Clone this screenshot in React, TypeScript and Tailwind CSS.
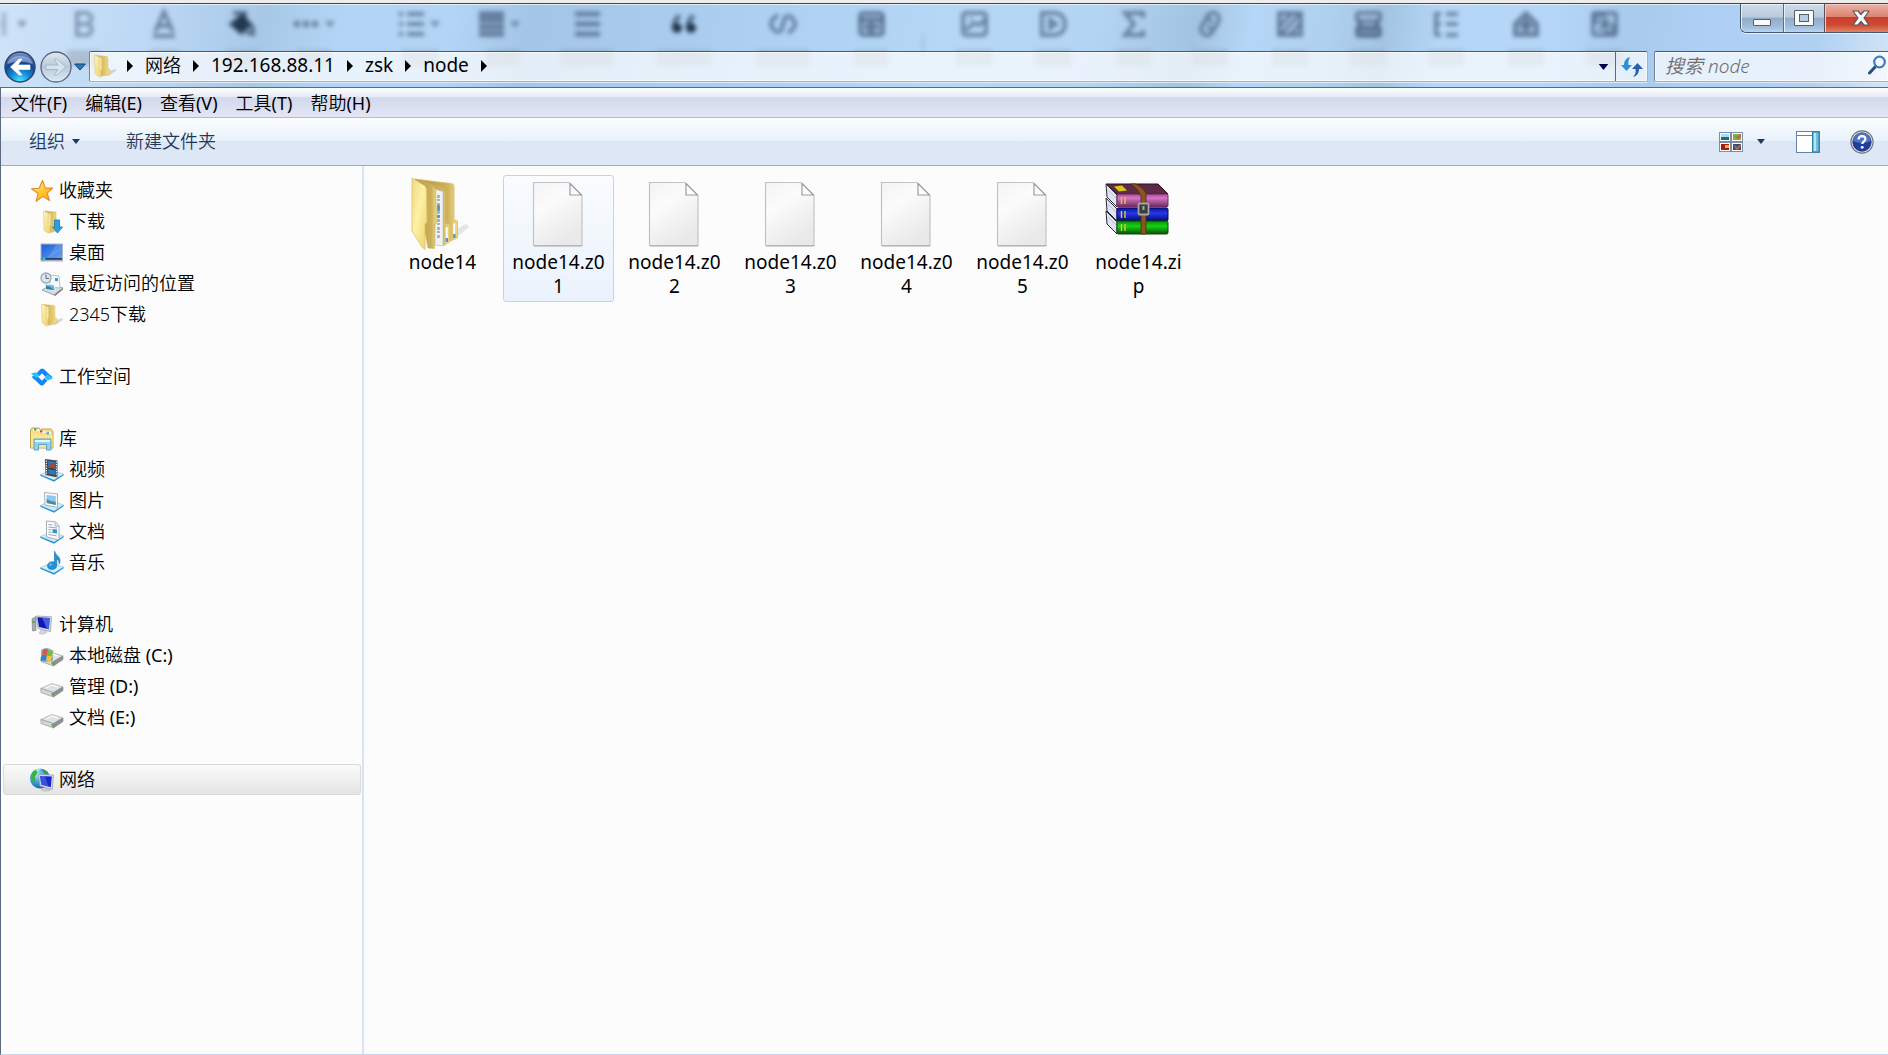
import React from "react";

type IconProps = { className?: string };

function FolderIcon({ className, children }: IconProps & { children?: React.ReactNode }) {
  return (
    <svg viewBox="0 0 24 24" className={className} aria-hidden="true">
      <defs>
        <linearGradient id="foldBack" x1="0" x2="1" y1="0" y2="0">
          <stop offset="0" stopColor="#c9a94e" />
          <stop offset=".55" stopColor="#dcc26a" />
          <stop offset="1" stopColor="#f5e08d" />
        </linearGradient>
        <linearGradient id="foldFront" x1="0" x2="1" y1="0" y2="1">
          <stop offset="0" stopColor="#fdf6c4" />
          <stop offset="1" stopColor="#efd473" />
        </linearGradient>
      </defs>
      <path d="M15 22l8-5-1-2-7 3z" fill="#b9bcc0" opacity=".6" />
      <path d="M3 1.500l11 1 .8 1v11l2 1v5l-2 .6-8 1.400z" fill="url(#foldBack)" stroke="#d8bd66" strokeWidth=".6" />
      <path d="M1.500 1l5 2.200V23.300L2 19.500z" fill="url(#foldFront)" stroke="#e0c873" strokeWidth=".6" />
      <path d="M6.500 3.200l2 1V15l-1 1v7.200l-1 .1z" fill="#f7e9a5" />
      {children}
    </svg>
  );
}

function StarIcon({ className }: IconProps) {
  return (
    <svg viewBox="0 0 24 24" className={className} aria-hidden="true">
      <defs>
        <linearGradient id="star" x1="0" x2="1" y1="0" y2="1">
          <stop offset="0" stopColor="#fff6a8" />
          <stop offset=".5" stopColor="#ffc832" />
          <stop offset="1" stopColor="#f59d1a" />
        </linearGradient>
      </defs>
      <path d="M12.500 1.500l2.800 7.400 7.400.2-5.500 5 2.300 7.500-6.700-4.200-6.600 4.800 2-7.700L1.500 9.800l7.600-.6z" fill="url(#star)" stroke="#e08a2c" strokeWidth="1.100" strokeLinejoin="round" />
    </svg>
  );
}

function DownloadsIcon({ className }: IconProps) {
  return (
    <svg viewBox="0 0 24 24" className={className} aria-hidden="true">
      <path d="M5 1l11 1v12l2 1v5.500L9 23z" fill="url(#foldBack)" stroke="#d8bd66" strokeWidth=".6" />
      <path d="M3.500 1l5 2.200V23.300L4 20.500z" fill="url(#foldFront)" stroke="#e0c873" strokeWidth=".6" />
      <path d="M8.500 3.200l2 1V15l-1 1v7.200l-1 .1z" fill="#f7e9a5" />
      <path d="M14.500 10h5v7h3L17.500 23l-5-6h2z" fill="#2d9fdc" stroke="#1478b4" strokeWidth=".8" />
    </svg>
  );
}

function DesktopIcon({ className }: IconProps) {
  return (
    <svg viewBox="0 0 24 24" className={className} aria-hidden="true">
      <defs>
        <linearGradient id="desk" x1="0" x2="1" y1="0" y2="1">
          <stop offset="0" stopColor="#1f5fd2" />
          <stop offset=".5" stopColor="#3f7fe6" />
          <stop offset="1" stopColor="#6aa7f2" />
        </linearGradient>
      </defs>
      <rect x=".5" y="2.500" width="22.500" height="18" fill="#a9b4c4" />
      <rect x="1.500" y="3.500" width="20.500" height="14" fill="url(#desk)" />
      <path d="M8 17.500L16 3.500h6V9z" fill="#fff" opacity=".13" />
      <rect x="1.500" y="17" width="20.500" height="1.800" fill="#2a3f63" />
      <circle cx="3.800" cy="18" r="1.700" fill="#3bc0d8" />
    </svg>
  );
}

function RecentIcon({ className }: IconProps) {
  return (
    <svg viewBox="0 0 24 24" className={className} aria-hidden="true">
      <path d="M2 18l8-5 13 3-9 7z" fill="#d8dadd" stroke="#8c9094" strokeWidth=".8" />
      <path d="M14 23l9-7v1.500L15 24z" fill="#777b80" />
      <path d="M10 3l9 1 1 12-10-1z" fill="#f7fafc" stroke="#aab4bc" strokeWidth=".8" />
      <path d="M15 6l3 .3v3l-3-.3z" fill="#4a90cf" />
      <path d="M5 12l9 1 1.500 6L6 17z" fill="#67b3e4" stroke="#e9eff4" strokeWidth="1" />
      <path d="M6 14l4 1 4 3-8-1z" fill="#2c7ba8" />
      <circle cx="6" cy="6" r="5" fill="#dce7ee" stroke="#9aabb8" strokeWidth="1.300" />
      <path d="M6 2.500V6.500h3" fill="none" stroke="#556b7c" strokeWidth="1" />
    </svg>
  );
}

function WorkspaceIcon({ className }: IconProps) {
  return (
    <svg viewBox="0 0 24 24" className={className} aria-hidden="true">
      <path d="M6.500 8.500L10.500 4q1.700-1.200 3.300 0l5.200 5 3.500 3-4.500 2.500-6-6.200-2.500 2.700z" fill="#1685f8" />
      <path d="M17.500 15.500L13.500 20q-1.700 1.200-3.300 0L5 15l-3.500-3L6 9.500l6 6.200 2.500-2.700z" fill="#1685f8" />
      <path d="M1 8.500l5-1.200 3.500 3L6.500 13.500z" fill="#24c4f7" />
      <path d="M23 13.500l-5 1.700-3.500-3 3-3z" fill="#24c4f7" />
    </svg>
  );
}

function LibraryIcon({ className }: IconProps) {
  return (
    <svg viewBox="0 0 24 24" className={className} aria-hidden="true">
      <path d="M.5 3L2 1h7l1.500 1.500L12 2h9l2 2.500V21H.5z" fill="#f5dd84" stroke="#b99b4b" strokeWidth=".9" />
      <path d="M3 2h6v2H3zM9.500 4h5v2h-5zM16 5h5v2h-5z" fill="#fff" />
      <path d="M4 1.500h2.500V3.500H4z" fill="#32a852" />
      <path d="M10 3.500h2.500v2H10z" fill="#d5382c" />
      <path d="M16.500 5.300h2.500v2h-2.500z" fill="#3498d8" />
      <path d="M1 6.500h7l2 1.500h12.500v12.500H1z" fill="#fae692" />
      <path d="M4 12h17v11h-4.500v-5.500h-8V23H4z" fill="#93d2ea" stroke="#4c9fc6" strokeWidth=".9" />
      <path d="M5 13h15v2H5z" fill="#e5f6fc" />
    </svg>
  );
}

function Tray() {
  return (
    <>
      <path d="M.5 16.500L11 12l12.500 4L14 22.500z" fill="#d3edfb" stroke="#8cc8ea" strokeWidth=".7" />
      <path d="M.3 16.500v1.200L14 23.700l9.700-6.500V16L14 22z" fill="#2e93d2" />
    </>
  );
}

function VideoIcon({ className }: IconProps) {
  return (
    <svg viewBox="0 0 24 24" className={className} aria-hidden="true">
      <Tray />
      <path d="M5 1l12.500 1.500v17L5.500 17z" fill="#454b52" />
      <path d="M8 3l7.500 1v13l-7-1.500z" fill="#2e78b7" />
      <path d="M9 7l5-2 1 5-3 2z" fill="#a8482c" />
      <path d="M6.500 2.500v14M16.600 3.500v15" stroke="#f2f2f2" strokeWidth="1.100" strokeDasharray="1.200 1.200" />
      <path d="M8.500 10.500l6 1" stroke="#1a2530" strokeWidth="1" />
    </svg>
  );
}

function PictureIcon({ className }: IconProps) {
  return (
    <svg viewBox="0 0 24 24" className={className} aria-hidden="true">
      <Tray />
      <path d="M4.500 3.500l13 1.500v13.500L5 16z" fill="#fafcfd" stroke="#9ba7b1" strokeWidth=".9" />
      <path d="M6.500 6l9.300 1v9L6.800 14z" fill="#8cc8f2" />
      <path d="M6.700 10l4 2 5 1v3l-9-2z" fill="#4b8d92" />
    </svg>
  );
}

function DocumentIcon({ className }: IconProps) {
  return (
    <svg viewBox="0 0 24 24" className={className} aria-hidden="true">
      <Tray />
      <path d="M6.500 1l9 .8 3.500 4V20L6.500 17z" fill="#fafcfe" stroke="#97a5b1" strokeWidth=".9" />
      <path d="M15 2v4l4 .3" fill="#dfe7ed" stroke="#97a5b1" strokeWidth=".7" />
      <path d="M8.500 4.500l4 .5M8.500 7l8.500 1M8.500 9.500l3 .4M8.500 12l3 .4M8.500 14.500l8 1.300" stroke="#8b9bc0" strokeWidth=".9" />
      <path d="M12.500 9l4.500.6v4l-4.500-.7z" fill="#3d93bf" />
    </svg>
  );
}

function MusicIcon({ className }: IconProps) {
  return (
    <svg viewBox="0 0 24 24" className={className} aria-hidden="true">
      <Tray />
      <path d="M15 .5c0 4 5.500 4.500 5 10-.1 1.500-.6 2-1 2.500.3-3-1-4.500-2.200-5V14c0 3-2 4.500-5 4.500s-4.300-1.700-4.300-3.700c0-2.300 2-4 5-4 .9 0 1.500.1 2 .4V.5z" fill="#2490d8" stroke="#166eaf" strokeWidth=".6" />
      <circle cx="10.500" cy="13.500" r="1.600" fill="#5bb5ea" />
    </svg>
  );
}

function ComputerIcon({ className }: IconProps) {
  return (
    <svg viewBox="0 0 24 24" className={className} aria-hidden="true">
      <path d="M2 6l4-2.500v14L2.500 18z" fill="#a4aab0" stroke="#7c8288" strokeWidth=".6" />
      <path d="M2.500 8h2v2h-2z" fill="#36b04a" />
      <path d="M11 16.500l5 .5 1 2.500q-4 3-8 1z" fill="#d3d6da" stroke="#b4b8bd" strokeWidth=".6" />
      <path d="M6 3l15.500.7-1 15L8 15.500z" fill="#d4dae3" stroke="#969eaa" strokeWidth=".7" />
      <path d="M7.300 4.300l12.500.6-1 11.300L9 14z" fill="#1218b4" />
      <path d="M12 4.500l7.800.4-1 11.300-2-.5z" fill="#5a7cf0" opacity=".7" />
    </svg>
  );
}

function DriveBody() {
  return (
    <>
      <path d="M.8 13.500L12 8.500l11 3.500-9.500 5.500z" fill="#dfe1e2" stroke="#a7aaad" strokeWidth=".7" />
      <path d="M.8 13.500l12.700 4v4.500L1 17.500z" fill="#d4d6d8" stroke="#94989b" strokeWidth=".7" />
      <path d="M13.500 17.500L23 12v3.500L13.500 22z" fill="#8e9194" stroke="#7c7f82" strokeWidth=".6" />
      <path d="M11.500 18l2.300.6v2.500l-2.300-.6z" fill="#46b52e" />
      <path d="M6 13l6-3 6 2" fill="none" stroke="#fff" strokeWidth="1" />
    </>
  );
}

function DriveIcon({ className }: IconProps) {
  return (
    <svg viewBox="0 0 24 24" className={className} aria-hidden="true">
      <DriveBody />
    </svg>
  );
}

function SystemDriveIcon({ className }: IconProps) {
  return (
    <svg viewBox="0 0 24 24" className={className} aria-hidden="true">
      <DriveBody />
      <path d="M1 6q5-4 11 0l1 10q-6 3-12 1z" fill="#2d6fa8" opacity=".55" />
      <path d="M3 6c2-1.500 3.500-1.300 5-.2L7 11c-2-1.200-3-1-5 .2z" fill="#e8542a" />
      <path d="M8.700 6.100c2 1.200 3 1 4.800 0l-1.200 5c-2 1.200-3 1-4.700.2z" fill="#7dbb3a" />
      <path d="M1.900 11.500c2-1.300 3.200-1.200 4.800-.2L5.500 17c-1.500-1-3-1-5 0z" fill="#2f86cd" />
      <path d="M7.300 11.600c1.700 1 3 .9 4.900-.1L11 16.500c-1.600 1-3 1-4.900.1z" fill="#fac32f" />
    </svg>
  );
}

function NetworkIcon({ className }: IconProps) {
  return (
    <svg viewBox="0 0 24 24" className={className} aria-hidden="true">
      <defs>
        <radialGradient id="globe" cx=".35" cy=".3" r=".8">
          <stop offset="0" stopColor="#9fe3f5" />
          <stop offset=".6" stopColor="#2a8fd0" />
          <stop offset="1" stopColor="#14559a" />
        </radialGradient>
      </defs>
      <circle cx="10" cy="10.500" r="10" fill="url(#globe)" />
      <path d="M2 5c2-3 5-4.500 7-4-1 2-2 2-2 4s-3 3-2 5 0 5-1 4C1 12 0 9 2 5z" fill="#3fae46" />
      <path d="M12 1c4 1 6 3 7 5.500l-5-1z" fill="#3a9c48" />
      <path d="M5 2q3-2 6-1.500L8 4z" fill="#c9f2e0" opacity=".8" />
      <path d="M14 19.500l6 1v2l-5 .8-4-1.500z" fill="#c9cdd2" stroke="#aaa" strokeWidth=".5" />
      <path d="M8.500 6.500L23.500 7l-1.200 14.500L10 18z" fill="#d8dee6" stroke="#8f98a5" strokeWidth=".7" />
      <path d="M10 8l11.800.4-1 10.800-9.500-2.500z" fill="#1a24c8" />
      <path d="M10 8h5l3.500 10.500-7.200-1.800z" fill="#4c72ee" opacity=".6" />
    </svg>
  );
}

function Chevron() {
  return (
    <svg viewBox="0 0 6 12" className="h-3 w-1.5 shrink-0" aria-hidden="true">
      <path d="M0 0l6 6-6 6z" fill="#000" />
    </svg>
  );
}

function Caret({ className }: IconProps) {
  return (
    <svg viewBox="0 0 8 5" className={className} aria-hidden="true">
      <path d="M0 0h8L4 5z" fill="currentColor" />
    </svg>
  );
}

/* Out-of-focus editor toolbar that shines through the glass title bar. */
const captionMarks: [number, number][] = [
  [84, 34], [164, 30], [243, 34], [314, 34], [420, 36], [503, 34], [587, 54], [684, 54], [783, 54],
  [871, 34], [974, 36], [1053, 36], [1133, 36], [1210, 36], [1290, 36], [1368, 36], [1446, 36], [1526, 36], [1604, 36],
];

function GlassBackdrop() {
  return (
    <svg className="absolute left-0 top-0 h-[83px] w-[1740px] blur-[2px]" viewBox="0 4 1740 83" fill="none" stroke="#3a5274" strokeOpacity=".62" strokeWidth="4" aria-hidden="true">
      <path d="M-4 24h8M4 12v24" opacity=".5" />
      <g fill="#3a5274" fillOpacity=".5" stroke="none">
        {[22, 330, 435, 515].map((x) => (
          <path key={x} d={`M${x - 5} 21h10l-5 7z`} />
        ))}
      </g>
      <path d="M77 13h9a5 5 0 010 11h-9zM77 24h11a6 6 0 010 11H77z" opacity=".8" />
      <path d="M155 32l9-20 9 20M158 26h12M153 36h22" />
      <path d="M231 24l11-9 9 10-10 8z" fill="#24374f" stroke="#24374f" />
      <path d="M253 26v10M233 13h12v6M246 33h8" stroke="#24374f" />
      <path d="M294 24h6M303 24h6M312 24h6" strokeWidth="6" />
      <path d="M399 14h4M407 14h17M399 24h4M407 24h17M399 34h4M407 34h17" />
      <path d="M479 14h25M479 20h25M479 27h25M479 34h25" strokeWidth="6" />
      <path d="M575 14h25M575 24h25M575 34h25" strokeWidth="5" />
      <path d="M680 16q-6 3-6 12M694 16q-6 3-6 12" strokeWidth="5" stroke="#24374f" />
      <circle cx="677" cy="28" r="5" fill="#24374f" stroke="none" />
      <circle cx="691" cy="28" r="5" fill="#24374f" stroke="none" />
      <path d="M778 15q-14 9 0 18M788 15q14 9 0 18M786 15l-6 18" />
      <rect x="860" y="13" width="23" height="22" rx="3" fill="#3a5274" fillOpacity=".25" />
      <path d="M860 20h23M871 20v15M864 27h15" />
      <path d="M923 34v22" strokeWidth="1" opacity=".5" />
      <rect x="963" y="13" width="23" height="22" rx="3" />
      <path d="M966 30l8-7 5 2 6-5M970 19h2" />
      <path d="M1042 13h14q9 2 9 11t-9 11h-14zM1050 20l6 4-6 4z" />
      <path d="M1143 18v-5h-18l9 11-9 11h18v-5" />
      <g transform="rotate(-60 1210 24)">
        <path d="M1212 18h-8a6 6 0 000 12h4M1208 30h8a6 6 0 000-12h-4M1212 18q4 3 0 7M1208 30q-4-3 0-7" />
      </g>
      <rect x="1279" y="13" width="22" height="22" fill="#3a5274" fillOpacity=".15" />
      <path d="M1280 26l11-12M1281 34l18-19M1291 34l9-10" strokeWidth="3" />
      <rect x="1357" y="13" width="23" height="8" rx="2" />
      <rect x="1357" y="27" width="23" height="9" rx="2" fill="#3a5274" fillOpacity=".5" />
      <path d="M1360 21v6M1377 21v6" />
      <path d="M1436 12v24M1436 14h5M1446 14h12M1436 24h5M1446 24h12M1436 35h5M1446 35h12" />
      <path d="M1515 24l11-11 11 11v11h-22z" fill="#3a5274" fillOpacity=".3" />
      <path d="M1526 18v14M1520 25h12" />
      <rect x="1593" y="13" width="23" height="22" rx="2" />
      <path d="M1595 15h10v8h-10zM1605 25h9v8h-9z" fill="#3a5274" fillOpacity=".3" strokeWidth="2" />
      <path d="M1598 31l12-12" strokeWidth="3" />
      <g fill="#6f7478" fillOpacity=".28" stroke="none">
        {captionMarks.map(([x, w]) => (
          <rect key={x} x={x - w / 2} y="50" width={w} height="16" />
        ))}
      </g>
    </svg>
  );
}

function TitleBar() {
  return (
    <div className="relative flex justify-end">
      <div className="flex h-[29px] overflow-hidden rounded-bl-md border-b border-l border-[#46566b] shadow-[0_1px_0_#e6f2fd]">
        <button aria-label="最小化" className="flex w-[43px] items-end justify-center border-r border-[#5b6c83] bg-[linear-gradient(#cddcea,#b9cbdd_47%,#8fabc8_50%,#a3c0de_85%,#bcd6f0)] pb-1.5 shadow-[inset_1px_1px_0_#e6f1fb]">
          <span className="h-[7px] w-[18px] rounded-[1px] border border-[#535d6c] bg-[#fbfbfb]" />
        </button>
        <button aria-label="最大化" className="flex w-[41px] items-center justify-center border-r border-[#5b4d5c] bg-[linear-gradient(#cddcea,#b9cbdd_47%,#8fabc8_50%,#a3c0de_85%,#bcd6f0)] shadow-[inset_1px_1px_0_#e6f1fb]">
          <span className="flex h-4 w-5 items-center justify-center rounded-[1px] border border-[#535d6c] bg-[#fbfbfb]">
            <span className="h-2 w-2.5 border border-[#535d6c] bg-[#b9cde2]" />
          </span>
        </button>
        <button aria-label="关闭" className="flex w-[63px] items-center bg-[linear-gradient(#eab3a6,#dd8371_45%,#c8402c_48%,#cf4a30_75%,#e08468)] pl-[27px] shadow-[inset_1px_1px_0_#f3cdc4]">
          <svg viewBox="0 0 18 16" className="h-4 w-[18px]" aria-hidden="true">
            <path d="M1 1h5l3 3.500L12 1h5l-5 7 5 7h-5L9 11.500 6 15H1l5-7z" fill="#fafafa" stroke="#5a5560" strokeWidth="1.200" strokeLinejoin="round" />
          </svg>
        </button>
      </div>
    </div>
  );
}

function NavButtons() {
  return (
    <div className="flex w-[89px] shrink-0 items-center pl-1">
      <button aria-label="后退" className="h-8 w-8">
        <svg viewBox="0 0 32 32" className="h-8 w-8" aria-hidden="true">
          <defs>
            <radialGradient id="back" cx=".5" cy="1" r=".95">
              <stop offset="0" stopColor="#4ff0ff" />
              <stop offset=".35" stopColor="#1590dc" />
              <stop offset=".7" stopColor="#16428f" />
              <stop offset="1" stopColor="#6d8fc9" />
            </radialGradient>
          </defs>
          <circle cx="16" cy="16" r="15" fill="url(#back)" stroke="#2b4168" strokeWidth="1.400" />
          <path d="M3.500 13C5 2 27 2 28.500 13 20 10 12 10 3.500 13z" fill="#fff" opacity=".35" />
          <path d="M6.500 16l8.500-8h3l-4 6h12v4.500H14L18 24h-3z" fill="#fff" stroke="#fff" strokeWidth=".6" strokeLinejoin="round" />
        </svg>
      </button>
      <button aria-label="前进" className="ml-1 h-8 w-8">
        <svg viewBox="0 0 32 32" className="h-8 w-8" aria-hidden="true">
          <defs>
            <linearGradient id="fwd" x1="0" x2="0" y1="0" y2="1">
              <stop offset="0" stopColor="#dfe8f1" />
              <stop offset=".5" stopColor="#b9c9da" />
              <stop offset="1" stopColor="#dcebf8" />
            </linearGradient>
          </defs>
          <circle cx="16" cy="16" r="15" fill="url(#fwd)" stroke="#56657a" strokeWidth="1.300" />
          <path d="M25.500 16L17 8h-3l4 6H6v4.500h12L14 24h3z" fill="#d7e3ee" stroke="#a3b4c6" strokeWidth=".9" strokeLinejoin="round" />
        </svg>
      </button>
      <button aria-label="最近浏览的位置" className="ml-0.5 flex h-8 w-3 items-center">
        <svg viewBox="0 0 12 8" className="h-2 w-3" aria-hidden="true">
          <path d="M.7 1h10.600L6 7z" fill="#2679bd" stroke="#173f6e" />
        </svg>
      </button>
    </div>
  );
}

function AddressRow() {
  const crumbs = ["网络", "192.168.88.11", "zsk", "node"];
  return (
    <div className="relative flex h-[31px]">
      <NavButtons />
      <div className="flex flex-1 rounded-[2px] border border-[#9fb0c2] border-t-[#4a5a6d] border-l-[#70839a] bg-white/70 shadow-[inset_0_0_0_1px_#ffffffa0,0_1px_0_#dcebfa]">
        <FolderIcon className="ml-[3px] mt-px h-[26px] w-6 shrink-0" />
        <nav aria-label="地址" className="ml-2.5 flex flex-1 items-center pb-0.5 text-[19px]">
          <Chevron />
          {crumbs.map((c, i) => (
            <React.Fragment key={c}>
              <a href="#" className={i === 0 ? "mx-3 text-[18px]" : "mx-3 font-normal"}>{c}</a>
              <Chevron />
            </React.Fragment>
          ))}
        </nav>
        <button aria-label="以前的位置" className="flex w-6 items-center justify-center text-[#00004e]">
          <Caret className="h-1.5 w-[11px]" />
        </button>
        <button aria-label="刷新" className="flex w-8 items-center justify-center border-l border-[#5d6a79]">
          <svg viewBox="0 0 22 20" className="h-5 w-[22px]" aria-hidden="true">
            <path d="M9 0C5 1 3 4 3 8H0l5.500 6L11 8H7.500C7 5 7.500 2.500 9 0z" fill="#2f8fd2" />
            <path d="M12 20c4-1 6-4 6-8h4l-5.500-6L11 12h3.500c.5 3 0 5.500-2.500 8z" fill="#2a5fae" />
          </svg>
        </button>
      </div>
      <div className="ml-1.5 flex w-[234px] items-center rounded-l-[2px] border border-r-0 border-[#9fb0c2] border-t-[#4a5a6d] border-l-[#70839a] bg-white/70 pl-2.5 shadow-[inset_0_0_0_1px_#ffffffa0,0_1px_0_#dcebfa]">
        <input aria-label="搜索" placeholder="搜索 node" className="min-w-0 flex-1 bg-transparent text-[19px] italic outline-none placeholder:text-[#6d6d6d]" />
        <svg viewBox="0 0 18 20" className="mr-0.5 mb-1 h-5 w-[18px] shrink-0" aria-hidden="true">
          <path d="M8 11l-6.500 7" stroke="#274c80" strokeWidth="3" strokeLinecap="round" />
          <circle cx="11.500" cy="7" r="5.300" fill="#f2f8fe" stroke="#3f7cc0" strokeWidth="2.200" />
        </svg>
      </div>
    </div>
  );
}

function MenuBar() {
  const menus = [
    ["文件", "(F)"],
    ["编辑", "(E)"],
    ["查看", "(V)"],
    ["工具", "(T)"],
    ["帮助", "(H)"],
  ];
  return (
    <div className="flex h-[30px] items-center gap-[18px] border-b border-[#b6bacf] bg-[linear-gradient(#ffffff,#e4e9f4_32%,#d2d8eb_33%,#e3e6f6)] pl-2.5 pt-0.5 text-[18px]">
      {menus.map(([name, key]) => (
        <button key={key}>
          {name}
          <span className="font-normal">{key}</span>
        </button>
      ))}
    </div>
  );
}

function CommandBar() {
  return (
    <div className="flex h-12 items-center border-b border-[#9dabc7] bg-[linear-gradient(#fbfdff,#e8f1fa_48%,#dce6f4_49%,#dee8f6)] pl-7 pr-3.5 text-[18px] text-[#1e395b]">
      <button className="flex items-center gap-[7px]">
        组织
        <Caret className="h-[5px] w-2" />
      </button>
      <button className="ml-[46px]">新建文件夹</button>
      <div className="flex flex-1 items-center justify-end">
        <button aria-label="更改您的视图">
          <svg viewBox="0 0 24 20" className="h-5 w-6" aria-hidden="true">
            <g fill="#fff" stroke="#7b8fab">
              <rect x=".5" y=".5" width="11" height="9" />
              <rect x="12.500" y=".5" width="11" height="9" />
              <rect x=".5" y="10.500" width="11" height="9" />
              <rect x="12.500" y="10.500" width="11" height="9" />
            </g>
            <path d="M2 2h8v3H2z" fill="#a8dcf2" />
            <path d="M2 5h8v3H2z" fill="#256b69" />
            <path d="M14 2h8v6h-8z" fill="#7bb449" />
            <path d="M14 3l4 2 4-3v3l-3 2z" fill="#dd5530" />
            <path d="M2 12h8v6H2z" fill="#a51c0c" />
            <path d="M6 13h4v3H6z" fill="#f0b22c" />
            <path d="M14 12h8v6h-8z" fill="#2e4d86" />
            <path d="M14 12l4 3 4-3v2l-3 4h-2z" fill="#b9603c" />
          </svg>
        </button>
        <button aria-label="更多选项" className="ml-3.5">
          <Caret className="h-[5px] w-2" />
        </button>
        <button aria-label="显示预览窗格" className="ml-[31px]">
          <svg viewBox="0 0 24 22" className="h-[22px] w-6" aria-hidden="true">
            <rect x=".5" y=".5" width="23" height="21" fill="#fff" stroke="#6583a8" />
            <path d="M1 4.500h15" stroke="#6583a8" />
            <rect x="16.500" y="1" width="6.500" height="20" fill="#75bddd" stroke="#2c7fa5" />
            <path d="M18 2h2v18h-2z" fill="#b8e6f5" />
          </svg>
        </button>
        <button aria-label="获取帮助" className="ml-[30px]">
          <svg viewBox="0 0 26 26" className="h-6 w-6" aria-hidden="true">
            <circle cx="13" cy="13" r="12" fill="#e8ebf0" stroke="#6d7480" strokeWidth="1.200" />
            <circle cx="13" cy="13" r="10" fill="#1d3f9f" stroke="#1a2d6b" strokeWidth=".8" />
            <path d="M3.500 12C4 0 22 0 22.500 12 16 15 10 15 3.500 12z" fill="#6f93dd" opacity=".6" />
            <path d="M9.300 10.300c0-5 7.600-4.800 7.400-.6-.1 2.500-3.400 2.700-3.400 5.600" fill="none" stroke="#fff" strokeWidth="2.500" />
            <circle cx="13.200" cy="18.800" r="1.600" fill="#fff" />
          </svg>
        </button>
      </div>
    </div>
  );
}

type TreeGroup = {
  label: string;
  Icon: React.FC<IconProps>;
  selected?: boolean;
  items: { label: string; drive?: string; Icon: React.FC<IconProps> }[];
};

const tree: TreeGroup[] = [
  {
    label: "收藏夹",
    Icon: StarIcon,
    items: [
      { label: "下载", Icon: DownloadsIcon },
      { label: "桌面", Icon: DesktopIcon },
      { label: "最近访问的位置", Icon: RecentIcon },
      { label: "2345下载", Icon: FolderIcon },
    ],
  },
  { label: "工作空间", Icon: WorkspaceIcon, items: [] },
  {
    label: "库",
    Icon: LibraryIcon,
    items: [
      { label: "视频", Icon: VideoIcon },
      { label: "图片", Icon: PictureIcon },
      { label: "文档", Icon: DocumentIcon },
      { label: "音乐", Icon: MusicIcon },
    ],
  },
  {
    label: "计算机",
    Icon: ComputerIcon,
    items: [
      { label: "本地磁盘", drive: "(C:)", Icon: SystemDriveIcon },
      { label: "管理", drive: "(D:)", Icon: DriveIcon },
      { label: "文档", drive: "(E:)", Icon: DriveIcon },
    ],
  },
  { label: "网络", Icon: NetworkIcon, selected: true, items: [] },
];

function Sidebar() {
  return (
    <nav aria-label="导航窗格" className="flex w-[363px] shrink-0 flex-col gap-[31px] border-r-2 border-[#d5e3f4] pl-0.5 pr-px pt-[9px] text-[18px]">
      {tree.map(({ label, Icon, selected, items }) => (
        <ul key={label}>
          <li>
            <a
              href="#"
              className={
                selected
                  ? "flex h-[31px] items-center gap-[5px] rounded-[3px] border border-[#d9d9d9] bg-linear-to-b from-[#fafbfb] to-[#e4e4e4] pl-[26px]"
                  : "flex h-[31px] items-center gap-[5px] pl-[27px]"
              }
            >
              <Icon className="h-6 w-6 shrink-0" />
              {label}
            </a>
          </li>
          {items.map((item) => (
            <li key={item.label}>
              <a href="#" className="flex h-[31px] items-center gap-[5px] pl-[37px]">
                <item.Icon className="h-6 w-6 shrink-0" />
                <span>
                  {item.label}
                  {item.drive && <span className="font-normal"> {item.drive}</span>}
                </span>
              </a>
            </li>
          ))}
        </ul>
      ))}
    </nav>
  );
}

function BigFolder() {
  return (
    <svg viewBox="0 0 60 74" className="mr-1 mt-0.5 h-[74px] w-[60px]" aria-hidden="true">
      <defs>
        <linearGradient id="bigA" x1="0" x2="1" y1="0" y2="1">
          <stop offset="0" stopColor="#efd980" />
          <stop offset=".45" stopColor="#fdf1a6" />
          <stop offset="1" stopColor="#ecd06a" />
        </linearGradient>
        <linearGradient id="bigB" x1="0" x2="1" y1="0" y2="0">
          <stop offset="0" stopColor="#b3964a" />
          <stop offset=".75" stopColor="#cdb05a" />
          <stop offset="1" stopColor="#efdb88" />
        </linearGradient>
      </defs>
      <path d="M40 65l18-15-3-3-14 8z" fill="#9a9ea3" opacity=".25" />
      <path d="M4 2l37.500 4.700q1.500 1 1.500 3V43l3.500 1v17L36 65z" fill="url(#bigB)" stroke="#d9bd62" strokeWidth=".8" />
      <path d="M5 3l25 8q4 2 4 5v30l4.700 2v17L32 69z" fill="url(#bigB)" stroke="#d9bd62" strokeWidth=".6" />
      <path d="M24 12l8 2.500V69l-8-1z" fill="#f0f1f2" stroke="#b3b5b7" strokeWidth=".6" />
      <path d="M27.500 18v44" stroke="#a3a8ae" strokeWidth="2.500" strokeDasharray="3 1 2 2" />
      <path d="M27.500 28v6M27.500 38v3" stroke="#4a8fd0" strokeWidth="2.500" />
      <path d="M4 2l18 7.500q2.700 1.500 2.700 4L25.700 46l-2.200 1.500v24L17 71z" fill="url(#bigB)" stroke="#cbae55" strokeWidth=".6" />
      <path d="M1 1l13 8q1.500 1.500 1.600 3.500L16 45l-2 2.500v25L11 70 1 54z" fill="url(#bigA)" stroke="#dcc167" strokeWidth=".8" />
      <path d="M34.500 50h2.500v15l-2.500 1zM42 46h2.500v15l-2.500 1z" fill="#fff" stroke="#e0c874" strokeWidth=".6" />
      <path d="M34.600 61h2.400v4h-2.400zM42.100 57h2.400v4h-2.400z" fill="#4d94dd" />
    </svg>
  );
}

function FilePage() {
  return (
    <svg viewBox="0 0 52 66" className="mt-0.5 mr-0.5 h-[66px] w-[52px]" aria-hidden="true">
      <defs>
        <linearGradient id="page" x1="0" x2=".5" y1="0" y2="1">
          <stop offset="0" stopColor="#f4f4f4" />
          <stop offset=".4" stopColor="#fbfbfb" />
          <stop offset="1" stopColor="#e9e9e9" />
        </linearGradient>
      </defs>
      <path d="M1.500 1.500H37L50 15v49.500H1.500z" fill="url(#page)" stroke="#c3c3c3" strokeWidth="1.200" />
      <path d="M38 2.500v11.500h11.500z" fill="#fdfdfd" stroke="#9c9c9c" strokeWidth="1.200" strokeLinejoin="round" />
      <path d="M2 65h48" stroke="#a8a8a8" />
    </svg>
  );
}

function ArchiveBooks() {
  const books = [
    { y: 11, id: "bookP", edge: "#6d2f5f" },
    { y: 25, id: "bookB", edge: "#070a5a" },
    { y: 38, id: "bookG", edge: "#0a4b0a" },
  ];
  return (
    <svg viewBox="0 0 64 52" className="mb-1 mr-1 h-[52px] w-16" aria-hidden="true">
      <defs>
        <linearGradient id="bookP" x1="0" x2="0" y1="0" y2="1">
          <stop offset="0" stopColor="#a8478f" />
          <stop offset=".3" stopColor="#d874c6" />
          <stop offset="1" stopColor="#6a2a5c" />
        </linearGradient>
        <linearGradient id="bookB" x1="0" x2="0" y1="0" y2="1">
          <stop offset="0" stopColor="#0b1299" />
          <stop offset=".4" stopColor="#2338ee" />
          <stop offset="1" stopColor="#070a66" />
        </linearGradient>
        <linearGradient id="bookG" x1="0" x2="0" y1="0" y2="1">
          <stop offset="0" stopColor="#0c8a0c" />
          <stop offset=".4" stopColor="#14d514" />
          <stop offset="1" stopColor="#0b4d0b" />
        </linearGradient>
      </defs>
      <path d="M1 1h52l10 10H12z" fill="#5d2b47" stroke="#2b1020" />
      {books.map((b) => (
        <g key={b.id}>
          <path d={`M1 ${b.y - 10}l11 11v12L2 ${b.y + 3}z`} fill="#dfe2f0" stroke="#2a2a33" strokeWidth="1" />
          <path d={`M3 ${b.y - 4}l8 8`} stroke="#b4b8d2" strokeWidth=".8" />
          <rect x="12" y={b.y} width="51" height="13" rx="1.500" fill={`url(#${b.id})`} stroke={b.edge} />
          <path d={`M16.500 ${b.y + 3}v7M20 ${b.y + 3}v7`} stroke="#e0c92c" strokeWidth="1.400" />
        </g>
      ))}
      <path d="M9 3.500l8-1 5 5-8 1z" fill="#d8c81e" />
      <path d="M26 1h5q7 3 10 9v41h-5V13q-3-7-10-12z" fill="#8a5620" stroke="#4c2c0c" strokeWidth=".8" />
      <rect x="33.500" y="20.500" width="10" height="11" rx="1" fill="#3c3c3c" stroke="#a4a4a4" strokeWidth="1.800" />
      <path d="M38.500 23v4" stroke="#a8a8a8" strokeWidth="2" />
    </svg>
  );
}

const files = [
  { name: "node14", kind: "folder" },
  { name: "node14.z01", kind: "page", hot: true },
  { name: "node14.z02", kind: "page" },
  { name: "node14.z03", kind: "page" },
  { name: "node14.z04", kind: "page" },
  { name: "node14.z05", kind: "page" },
  { name: "node14.zip", kind: "archive" },
];

function FilePane() {
  return (
    <main className="flex flex-1 flex-wrap content-start gap-[5px] pl-[23px] pt-[9px] font-normal">
      {files.map((f) => (
        <button
          key={f.name}
          className={
            f.hot
              ? "flex h-[127px] w-[111px] flex-col items-center rounded-[3px] border border-[#b8d6fb] bg-linear-to-b from-[#fafcfe] to-[#eaf2fd]"
              : "flex h-[127px] w-[111px] flex-col items-center rounded-[3px] border border-transparent"
          }
        >
          <span className={f.kind === "archive" ? "flex h-[74px] shrink-0 items-start justify-center pt-[7px]" : "flex h-[74px] shrink-0 items-center justify-center"}>
            {f.kind === "folder" && <BigFolder />}
            {f.kind === "page" && <FilePage />}
            {f.kind === "archive" && <ArchiveBooks />}
          </span>
          <span className="w-[95px] text-center text-[19px] leading-6 break-all">{f.name}</span>
        </button>
      ))}
    </main>
  );
}

export default function App() {
  return (
    <div className="flex min-h-screen flex-col overflow-x-hidden bg-[#fcfcfc] font-['Noto_Sans','Noto_Sans_CJK_SC',sans-serif] font-[350] leading-normal text-black">
      <div className="h-[3px] bg-[#ededed]" />
      <header className="relative h-[84px] overflow-hidden border-t border-[#3b4656] bg-[linear-gradient(100deg,#cfe3f8_0%,#bcd8f5_8%,#a8c8e8_14%,#b3d4f4_18%,#b3d4f4_24%,#a4c5e6_28%,#abcef0_38%,#b6d7f6_50%,#b4d4f3_58%,#a3c3e2_63%,#b5d6f6_66%,#b0d0ef_70%,#a3c4e3_73%,#b5d6f6_76%,#b5d6f6_82%,#a8caeb_86%,#aed0f5_90%,#b2d1f1_96%,#d3e5f7_100%)] shadow-[inset_0_1px_0_#e3f0fc]">
        <GlassBackdrop />
        <TitleBar />
        <div className="mt-[18px]">
          <AddressRow />
        </div>
      </header>
      <div className="flex flex-1 flex-col border-b border-l border-t border-b-[#c6d6ec] border-l-[#5b6a80] border-t-[#5a6b80]">
        <MenuBar />
        <CommandBar />
        <div className="flex flex-1">
          <Sidebar />
          <FilePane />
        </div>
      </div>
    </div>
  );
}
